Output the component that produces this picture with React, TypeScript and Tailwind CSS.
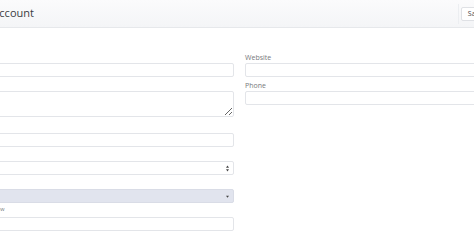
import React from "react";

function Label({ children }: { children: React.ReactNode }) {
  return (
    <div className="h-[14px] flex items-end pb-[2px] text-[7px] leading-none text-[#77797c]">{children}</div>
  );
}

function Input() {
  return <div className="h-[14px] rounded-[2px] border border-[#e3e5e9] bg-white" />;
}

export default function App() {
  return (
    <div
      className="w-[534px] -ml-[40px] h-[248px] overflow-hidden bg-white text-[#333]"
      style={{ fontFamily: '"Open Sans", "Liberation Sans", sans-serif' }}
    >
      <div className="h-[28px] border-b border-[#e6e8eb] bg-gradient-to-b from-[#fbfbfc] to-[#f4f5f7] flex items-center pb-[2px] pl-[10px] pr-[4px]">
        <div className="text-[11px] leading-none text-[#3a3d42]">Edit Account</div>
        <div className="ml-auto flex items-center h-full pt-[2px]">
          <div className="h-[20px] w-px bg-[#eceef1] mr-[2px]" />
          <div className="h-[14px] px-[6px] rounded-[2px] border border-[#dfe1e5] bg-white text-[7px] leading-[12px] text-[#444]">
            Save
          </div>
        </div>
      </div>
      <div className="grid grid-cols-[274px_244px] gap-x-[11px] pt-[21px]">
        <div className="flex flex-col">
          <Label>Name</Label>
          <Input />
          <Label>Notes</Label>
          <div className="h-[26px] rounded-[2px] border border-[#e3e5e9] bg-white">
            <textarea className="w-full h-full block bg-transparent outline-none text-[7px] resize-y" />
          </div>
          <div className="h-[16px]" />
          <Input />
          <div className="h-[14px]" />
          <div className="h-[14px] rounded-[2px] border border-[#e3e5e9] bg-white flex items-center justify-end pr-[4px]">
            <svg width="3" height="7" viewBox="0 0 4 9">
              <path d="M0 3.5 L2 0.5 L4 3.5 Z" fill="#444" />
              <path d="M0 5.5 L2 8.5 L4 5.5 Z" fill="#444" />
            </svg>
          </div>
          <div className="h-[14px]" />
          <div className="h-[14px] rounded-[2px] border border-[#d9dce6] bg-[#e1e4ee] flex items-center justify-end pr-[4px]">
            <svg width="3" height="3" viewBox="0 0 4 4">
              <path d="M0 1 L2 3.5 L4 1 Z" fill="#444" />
            </svg>
          </div>
          <div className="h-[14px] flex items-center text-[5.5px] leading-none text-[#77797c]">Show in overview</div>
          <Input />
        </div>
        <div className="flex flex-col">
          <Label>Website</Label>
          <Input />
          <Label>Phone</Label>
          <Input />
        </div>
      </div>
    </div>
  );
}
